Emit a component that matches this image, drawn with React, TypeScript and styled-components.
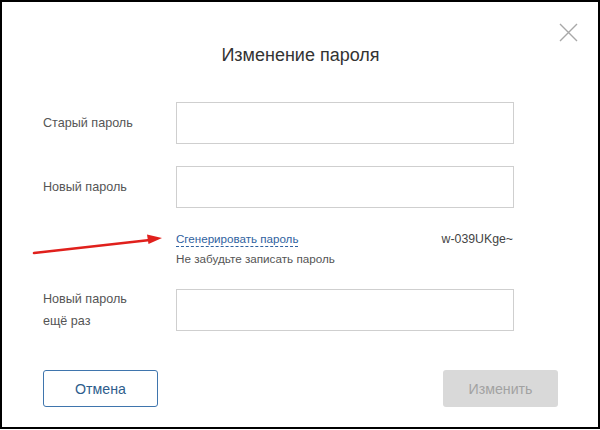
import React from "react";
import styled, { createGlobalStyle } from "styled-components";

const GlobalStyle = createGlobalStyle`
  html, body {
    margin: 0;
    padding: 0;
    background: #fff;
  }
  * {
    box-sizing: border-box;
  }
`;

const Frame = styled.div`
  position: relative;
  width: 600px;
  height: 429px;
  border: 2px solid #000;
  background: #fff;
  padding: 0 40px 0 41px;
  font-family: "Liberation Sans", Arial, sans-serif;
  color: #555;
`;

const CloseButton = styled.button`
  position: absolute;
  top: 21px;
  right: 20px;
  width: 19px;
  height: 19px;
  padding: 0;
  border: none;
  background: transparent;
  cursor: pointer;
  display: flex;
`;

const Title = styled.h1`
  margin: 0;
  padding-top: 41px;
  font-size: 18px;
  line-height: 24px;
  font-weight: 400;
  color: #333;
  text-align: center;
`;

const Form = styled.div`
  margin-top: 35px;
  display: flex;
  flex-direction: column;
`;

const Row = styled.div<{ $gap?: number }>`
  display: grid;
  grid-template-columns: 133px 338px;
  align-items: center;
  margin-top: ${(p) => p.$gap ?? 0}px;
`;

const Label = styled.label`
  font-size: 12.6px;
  line-height: 22px;
  color: #555;
`;

const Input = styled.input`
  height: 42px;
  width: 100%;
  border: 1px solid #cfcfcf;
  background: #fff;
  outline: none;
  padding: 0 10px;
  font-size: 14px;
  font-family: inherit;
`;

const Generator = styled.div`
  display: flex;
  flex-direction: column;
`;

const GenLine = styled.div`
  display: flex;
  justify-content: space-between;
  align-items: center;
  height: 21px;
`;

const GenLink = styled.a`
  font-size: 11.6px;
  line-height: 15px;
  color: #2f62a0;
  text-decoration: none;
  border-bottom: 1px dashed #2f62a0;
  cursor: pointer;
`;

const Generated = styled.span`
  font-size: 12.3px;
  color: #444;
  padding-right: 1px;
`;

const Hint = styled.div`
  font-size: 11.7px;
  line-height: 20px;
  color: #555;
`;

const Actions = styled.div`
  margin-top: 38px;
  display: flex;
  justify-content: space-between;
`;

const Button = styled.button<{ $primary?: boolean }>`
  width: 115px;
  height: 37px;
  border-radius: 3px;
  font-family: inherit;
  font-size: 14.2px;
  cursor: pointer;
  border: ${(p) => (p.$primary ? "none" : "1px solid #3f75ad")};
  background: ${(p) => (p.$primary ? "#d9d9d9" : "#fff")};
  color: ${(p) => (p.$primary ? "#a2a2a2" : "#2d5d8c")};
`;

const Arrow = styled.svg`
  position: absolute;
  left: 28px;
  top: 228px;
  pointer-events: none;
`;

const CloseIcon = () => (
  <svg width="19" height="19" viewBox="0 0 19 19">
    <path d="M1 1 L18 18 M18 1 L1 18" stroke="#a8a8a8" strokeWidth="1.4" fill="none" />
  </svg>
);

export default function App() {
  return (
    <>
      <GlobalStyle />
      <Frame>
        <CloseButton aria-label="Закрыть">
          <CloseIcon />
        </CloseButton>
        <Title>Изменение пароля</Title>
        <Form>
          <Row>
            <Label>Старый пароль</Label>
            <Input type="password" />
          </Row>
          <Row $gap={22}>
            <Label>Новый пароль</Label>
            <Input type="password" />
          </Row>
          <Row $gap={20}>
            <span />
            <Generator>
              <GenLine>
                <GenLink>Сгенерировать пароль</GenLink>
                <Generated>w-039UKge~</Generated>
              </GenLine>
              <Hint>Не забудьте записать пароль</Hint>
            </Generator>
          </Row>
          <Row $gap={19}>
            <Label>
              Новый пароль
              <br />
              ещё раз
            </Label>
            <Input type="password" />
          </Row>
        </Form>
        <Actions>
          <Button>Отмена</Button>
          <Button $primary>Изменить</Button>
        </Actions>
        <Arrow width="136" height="28" viewBox="0 0 136 28">
          <line x1="4" y1="23" x2="120" y2="10" stroke="#e0201c" strokeWidth="2.6" strokeLinecap="round" />
          <polygon points="132,8 117,4.5 118.5,14" fill="#e0201c" />
        </Arrow>
      </Frame>
    </>
  );
}
